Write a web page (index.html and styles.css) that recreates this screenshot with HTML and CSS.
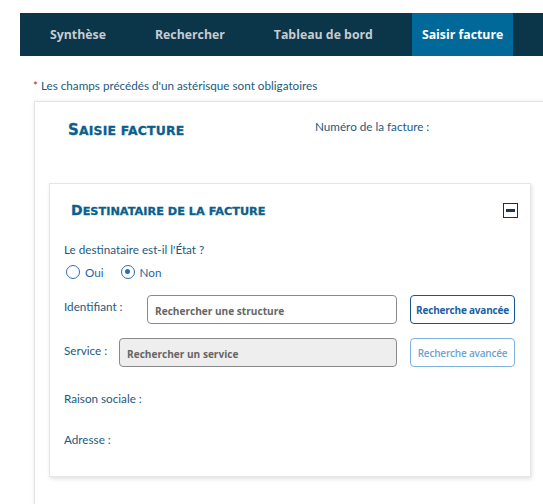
FILE: index.html
```html
<!DOCTYPE html>
<html lang="fr">
<head>
<meta charset="utf-8">
<title>Saisir facture</title>
<link rel="stylesheet" href="styles.css">
</head>
<body>
<nav class="nav">
  <a class="tab">Synthèse</a>
  <a class="tab">Rechercher</a>
  <a class="tab">Tableau de bord</a>
  <a class="tab active">Saisir facture</a>
</nav>
<p class="notice"><span class="req">*</span> Les champs précédés d'un astérisque sont obligatoires</p>
<section class="outer">
  <div class="outer-head">
    <h1 class="title title-main">Saisie facture</h1>
    <div class="numero">Numéro de la facture :</div>
  </div>
  <div class="card">
    <div class="card-head">
      <h2 class="title">Destinataire de la facture</h2>
      <span class="collapse" aria-label="Réduire"></span>
    </div>
    <div class="question">Le destinataire est-il l'État ?</div>
    <div class="radios">
      <label class="radio"><input type="radio" name="etat"> Oui</label>
      <label class="radio"><input type="radio" name="etat" checked> Non</label>
    </div>
    <div class="field-row">
      <label class="lbl lbl-id">Identifiant :</label>
      <input class="search" type="text" placeholder="Rechercher une structure">
      <button class="adv">Recherche avancée</button>
    </div>
    <div class="field-row row-svc">
      <label class="lbl lbl-svc">Service :</label>
      <input class="search" type="text" placeholder="Rechercher un service" disabled>
      <button class="adv" disabled>Recherche avancée</button>
    </div>
    <div class="info info-rs">Raison sociale :</div>
    <div class="info info-ad">Adresse :</div>
  </div>
</section>
</body>
</html>
```
FILE: styles.css
```css
html, body {
  margin: 0;
  padding: 0;
  overflow: hidden;
  background: #ffffff;
}
body {
  font-family: Lato, "Liberation Sans", sans-serif;
  font-size: 11.7px;
  color: #1d5a80;
  width: 543px;
  height: 504px;
}
.nav {
  display: flex;
  align-items: stretch;
  gap: 29px;
  margin: 13px 0 0 20px;
  padding-left: 20px;
  width: 600px;
  height: 43px;
  background: #0b3548;
  box-sizing: border-box;
}
.tab {
  display: flex;
  align-items: center;
  padding: 0 10px;
  font-family: "Open Sans", Lato, sans-serif;
  font-weight: 700;
  font-size: 12.3px;
  color: #c5ccd1;
  text-decoration: none;
}
.tab.active {
  background: #01699a;
  color: #ffffff;
}
.notice {
  margin: 22px 0 0 33px;
  line-height: 14px;
  height: 14px;
}
.req {
  color: #d0202a;
}
.outer {
  margin: 9px 0 0 34px;
  width: 600px;
  height: 420px;
  border: 1px solid #e4e4e4;
  box-shadow: 0 0 4px rgba(0, 0, 0, 0.08);
  padding: 0 0 0 14px;
  box-sizing: border-box;
}
.outer-head {
  display: flex;
  align-items: flex-start;
  height: 81px;
  padding: 17px 0 0 19px;
  box-sizing: border-box;
}
.title {
  margin: 0;
  font-family: "DejaVu Sans", Lato, sans-serif;
  font-weight: 700;
  text-transform: uppercase;
  font-size: 11.3px;
  line-height: 18px;
  color: #0b5f8c;
  -webkit-text-stroke: 0.3px #0b5f8c;
}
.title::first-letter {
  font-size: 14px;
}
.title-main {
  width: 247px;
  padding-top: 2px;
  font-size: 12.4px;
  letter-spacing: 0.2px;
}
.title-main::first-letter {
  font-size: 15px;
}
.numero {
  line-height: 14px;
}
.card {
  width: 482px;
  height: 294px;
  box-sizing: border-box;
  border: 1px solid #e6e6e6;
  box-shadow: 1px 2px 4px rgba(0, 0, 0, 0.12);
  background: #fff;
  padding: 0 15px 0 14px;
}
.card-head {
  display: flex;
  justify-content: space-between;
  align-items: flex-start;
  padding: 17px 0 0 7px;
  height: 54px;
  box-sizing: border-box;
}
.collapse {
  position: relative;
  width: 15px;
  height: 15px;
  margin-top: 2px;
  margin-right: -3px;
  border: 1.5px solid #1f2b48;
  box-sizing: border-box;
}
.collapse::after {
  content: "";
  position: absolute;
  left: 2px;
  right: 2px;
  top: 4.5px;
  height: 3px;
  background: #24345a;
}
.question {
  line-height: 14px;
  height: 14px;
  margin-top: 4px;
}
.radios {
  display: flex;
  gap: 15px;
  margin-top: 8px;
  height: 16px;
  align-items: center;
}
.radio {
  display: flex;
  align-items: center;
  gap: 5px;
  color: #2466ad;
  font-size: 11.7px;
  margin-left: 2px;
}
.radio input {
  appearance: none;
  -webkit-appearance: none;
  margin: 0;
  width: 14px;
  height: 14px;
  border: 1.3px solid #2d6db5;
  border-radius: 50%;
  box-sizing: border-box;
  position: relative;
}
.radio input:checked::after {
  content: "";
  position: absolute;
  left: 3px;
  top: 3px;
  width: 5.4px;
  height: 5.4px;
  border-radius: 50%;
  background: #1f6fc8;
}
.field-row {
  display: flex;
  align-items: flex-start;
  margin-top: 15px;
  height: 29px;
}
.row-svc {
  margin-top: 14px;
}
.lbl {
  line-height: 14px;
  padding-top: 4px;
  flex: none;
}
.lbl-id { width: 83px; }
.lbl-svc { width: 55px; padding-top: 5px; }
.search {
  flex: 1;
  min-width: 0;
  height: 29px;
  box-sizing: border-box;
  border: 1px solid #8a8a8a;
  border-radius: 4px;
  padding: 3px 7px 0;
  font-family: "Open Sans", Lato, sans-serif;
  font-size: 10.1px;
  font-weight: 700;
  color: #555;
  background: #fff;
  margin: 0;
}
.search::placeholder {
  color: #666;
  opacity: 1;
}
.search:disabled {
  background: #eeeeee;
}
.adv {
  flex: none;
  margin: 0 0 0 13px;
  width: 105px;
  height: 29px;
  box-sizing: border-box;
  border: 1px solid #16568f;
  border-radius: 4px;
  background: #fff;
  padding: 0;
  font-family: "Open Sans", Lato, sans-serif;
  font-size: 10px;
  font-weight: 700;
  letter-spacing: -0.2px;
  color: #1a5ea6;
}
.adv:disabled {
  border-color: #80b2df;
  color: #6aa3d8;
  font-weight: 600;
}
.info {
  line-height: 14px;
  height: 14px;
}
.info-rs {
  margin-top: 24px;
}
.info-ad {
  margin-top: 27px;
}
```
